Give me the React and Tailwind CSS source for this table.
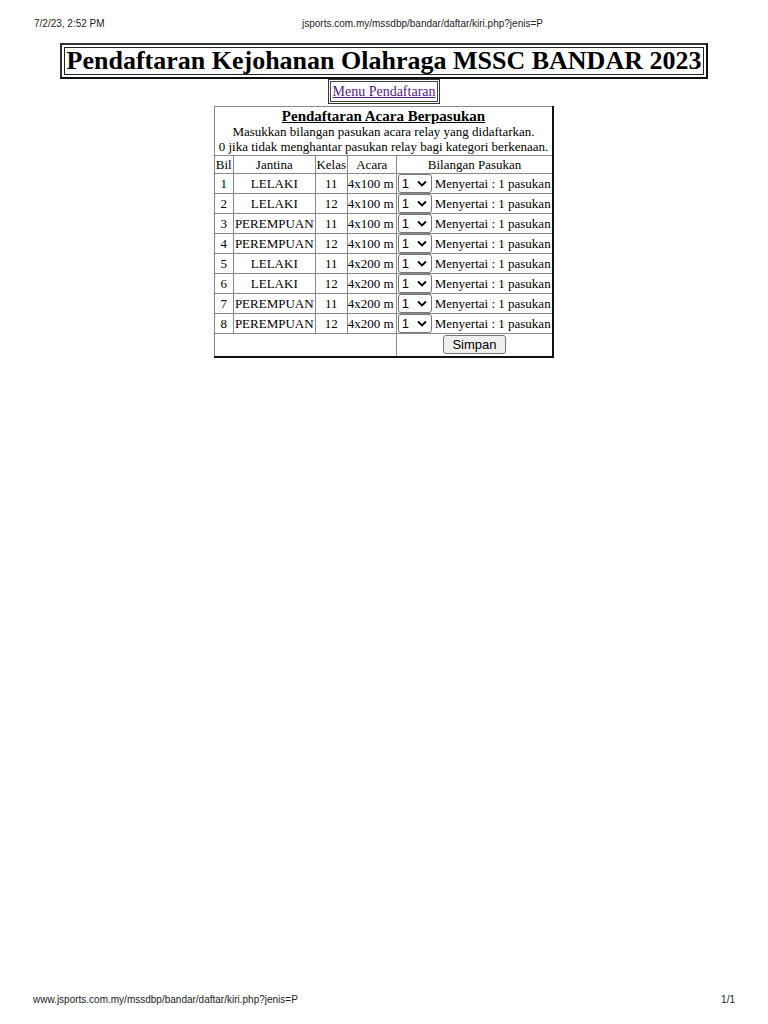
import React from 'react';

const rows = [
  { bil: 1, jantina: 'LELAKI', kelas: 11, acara: '4x100 m' },
  { bil: 2, jantina: 'LELAKI', kelas: 12, acara: '4x100 m' },
  { bil: 3, jantina: 'PEREMPUAN', kelas: 11, acara: '4x100 m' },
  { bil: 4, jantina: 'PEREMPUAN', kelas: 12, acara: '4x100 m' },
  { bil: 5, jantina: 'LELAKI', kelas: 11, acara: '4x200 m' },
  { bil: 6, jantina: 'LELAKI', kelas: 12, acara: '4x200 m' },
  { bil: 7, jantina: 'PEREMPUAN', kelas: 11, acara: '4x200 m' },
  { bil: 8, jantina: 'PEREMPUAN', kelas: 12, acara: '4x200 m' },
];

const cell = 'border border-[#8a8a8a] p-0 text-center';

const Select = () => (
  <div className="flex items-center justify-between w-[34px] h-[19px] border border-[#767676] rounded-[3px] bg-white pl-[3px] pr-[4px] font-['Liberation_Sans',sans-serif] text-[13px] text-black">
    <span>1</span>
    <svg width="10" height="7" viewBox="0 0 10 7">
      <path d="M1 1.5 L5 5.5 L9 1.5" fill="none" stroke="#000" strokeWidth="1.8" />
    </svg>
  </div>
);

export default function App() {
  return (
    <div className="relative w-[768px] h-[1024px] overflow-hidden bg-white text-black">
      {/* print header */}
      <div className="flex items-center h-[14px] mt-[16px] px-[34px] font-['Liberation_Sans',sans-serif] text-[10px] text-[#222]">
        <span className="w-[268px]">7/2/23, 2:52 PM</span>
        <span>jsports.com.my/mssdbp/bandar/daftar/kiri.php?jenis=P</span>
      </div>

      <div className="flex flex-col items-center mt-[13px] font-['Liberation_Serif',serif]">
        <div className="border-2 border-[#333] border-r-[#111] border-b-[#111] p-[2px]">
          <div className="border border-[#222] px-[2px] h-[28px] flex items-center">
            <h1 className="font-bold text-[26px] leading-none">
              Pendaftaran Kejohanan Olahraga MSSC BANDAR 2023
            </h1>
          </div>
        </div>

        <div className="border border-[#333] p-[1px]">
          <div className="border border-[#444] h-[21px] px-[1px] flex items-center">
            <a href="#" className="text-[#551a8b] underline text-[14px] leading-none">Menu Pendaftaran</a>
          </div>
        </div>

        <table className="mt-[2px] border-collapse border-t border-l border-[#444] border-r-2 border-b-2 border-r-[#111] border-b-[#111] text-[13px] leading-none">
          <colgroup>
            <col className="w-[19px]" />
            <col className="w-[82px]" />
            <col className="w-[32px]" />
            <col className="w-[49px]" />
            <col className="w-[157px]" />
          </colgroup>
          <tbody>
            <tr>
              <td colSpan={5} className="border border-[#8a8a8a] text-center pt-[2px] pb-[1px]">
                <div className="font-bold underline text-[15px] leading-[15px]">Pendaftaran Acara Berpasukan</div>
                <div className="leading-[15px]">Masukkan bilangan pasukan acara relay yang didaftarkan.</div>
                <div className="leading-[15px]">0 jika tidak menghantar pasukan relay bagi kategori berkenaan.</div>
              </td>
            </tr>
            <tr className="h-[18px]">
              <td className={cell}>Bil</td>
              <td className={cell}>Jantina</td>
              <td className={cell}>Kelas</td>
              <td className={cell}>Acara</td>
              <td className={cell}>Bilangan Pasukan</td>
            </tr>
            {rows.map((r) => (
              <tr key={r.bil} className="h-[20px]">
                <td className={cell}>{r.bil}</td>
                <td className={cell}>{r.jantina}</td>
                <td className={cell}>{r.kelas}</td>
                <td className={`${cell} text-left whitespace-nowrap`}>{r.acara}</td>
                <td className="border border-[#8a8a8a] p-0">
                  <div className="flex items-center gap-[3px] pl-[1px] whitespace-nowrap">
                    <Select />
                    <span>Menyertai : 1 pasukan</span>
                  </div>
                </td>
              </tr>
            ))}
            <tr className="h-[23px]">
              <td colSpan={4} className="border border-[#8a8a8a]"></td>
              <td className="border border-[#8a8a8a] text-center">
                <button className="h-[19px] px-[8px] border border-[#767676] rounded-[3px] bg-[#efefef] font-['Liberation_Sans',sans-serif] text-[13px] leading-none">
                  Simpan
                </button>
              </td>
            </tr>
          </tbody>
        </table>
      </div>

      {/* print footer */}
      <div className="absolute left-0 right-0 bottom-[17px] flex justify-between px-[33px] font-['Liberation_Sans',sans-serif] text-[10px] leading-[14px] text-[#222]">
        <span>www.jsports.com.my/mssdbp/bandar/daftar/kiri.php?jenis=P</span>
        <span>1/1</span>
      </div>
    </div>
  );
}
